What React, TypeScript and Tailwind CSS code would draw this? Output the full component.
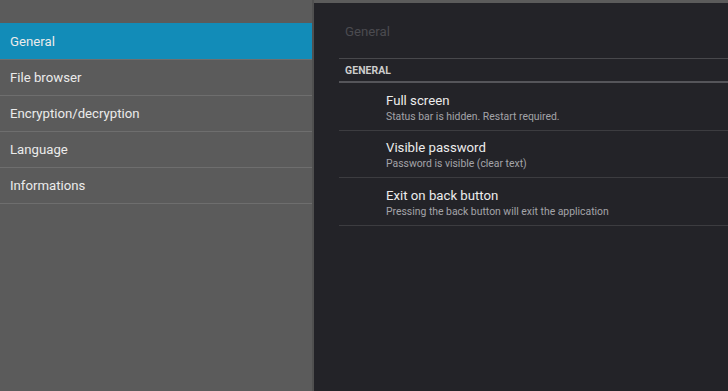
import React from "react";

const nav = ["General", "File browser", "Encryption/decryption", "Language", "Informations"];
const items = [
  { t: "Full screen", s: "Status bar is hidden. Restart required.", h: "h-[48px]" },
  { t: "Visible password", s: "Password is visible (clear text)", h: "h-[47px]" },
  { t: "Exit on back button", s: "Pressing the back button will exit the application", h: "h-[48px]" },
];

export default function App() {
  return (
    <div className="w-[728px] h-[391px] flex bg-[#5b5b5b] overflow-hidden" style={{ fontFamily: "Roboto, 'Noto Sans', sans-serif" }}>
      <div className="w-[312px] flex flex-col pt-[23px]">
        {nav.map((n, i) => (
          <div
            key={n}
            className={
              "h-[36px] flex items-center pl-[10px] pt-[1px] text-[13.2px] text-[#ebebeb] " +
              (i === 0 ? "bg-[#128cb8]" : "border-t border-[#6e6e6e]")
            }
          >
            {n}
          </div>
        ))}
        <div className="border-t border-[#6e6e6e]" />
      </div>
      <div className="w-[2px] bg-[#505050]" />
      <div className="flex-1 flex flex-col pt-[3px] bg-[#5b5b5b]">
        <div className="flex-1 bg-[#232328] pl-[25px]">
          <div className="h-[55px] flex items-center pl-[6px] pt-[3px] text-[13.2px] text-[#4b4b50]">General</div>
          <div className="border-t border-[#48484c]" />
          <div className="h-[22px] flex items-center pl-[6px] pt-[1px] text-[10.4px] font-bold text-[#cdcdcd] tracking-[0.1px]">GENERAL</div>
          <div className="border-t-2 border-[#55555a]" />
          {items.map((it) => (
            <div key={it.t} className={it.h + " flex flex-col justify-center pl-[47px] pt-[2px] border-b border-[#3c3c40]"}>
              <div className="text-[13.2px] leading-[17px] text-[#ececec]">{it.t}</div>
              <div className="text-[10.4px] leading-[15px] text-[#a4a4a8]">{it.s}</div>
            </div>
          ))}
        </div>
      </div>
    </div>
  );
}
